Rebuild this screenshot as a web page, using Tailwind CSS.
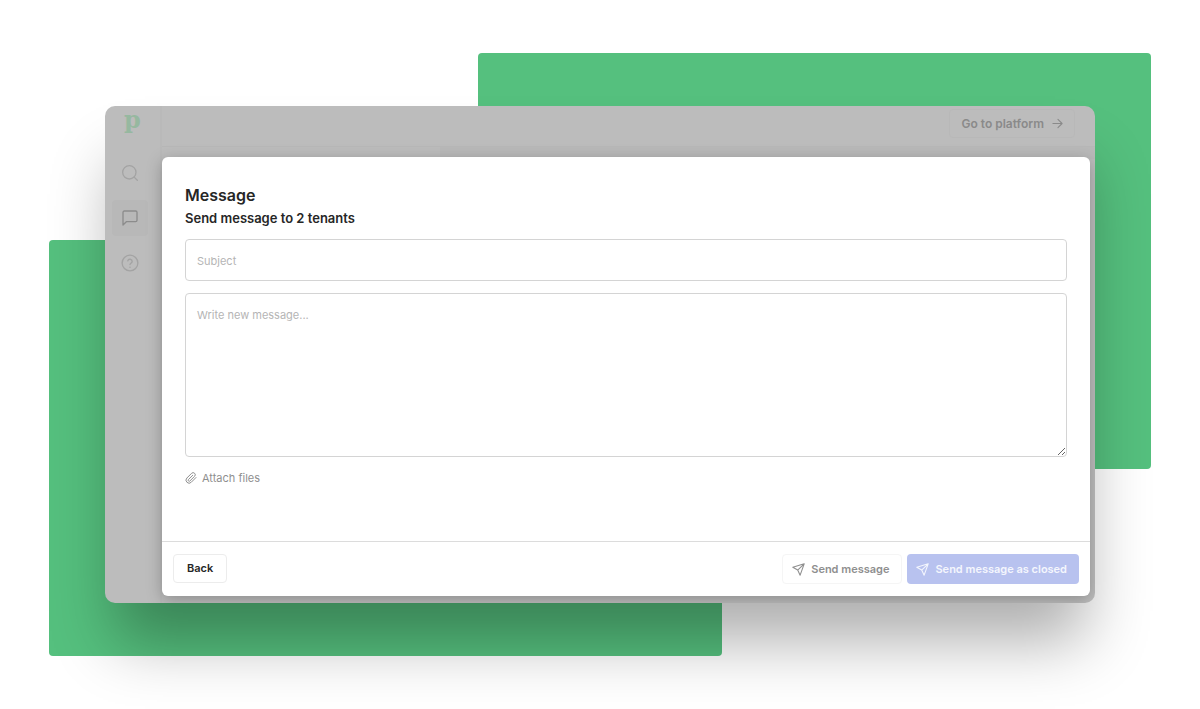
<!DOCTYPE html>
<html lang="en">
<head>
  <meta charset="UTF-8">
  <meta name="viewport" content="width=device-width, initial-scale=1.0">
  <title>Message tenants</title>
  <script src="https://cdn.jsdelivr.net/npm/@tailwindcss/browser@4"></script>
</head>
<body class="font-['Inter',sans-serif] bg-white text-[#262626]">
  <main class="px-[49px] py-[53px]">
    <div class="relative px-14 py-[53px]">
      <!-- green blocks behind the window -->
      <div class="absolute top-0 right-0 w-[61.1%] h-[416px] rounded bg-[#55c07e]"></div>
      <div class="absolute bottom-0 left-0 w-[61.1%] h-[416px] rounded bg-[#55c07e]"></div>

      <!-- app window -->
      <div class="relative rounded-[10px] bg-[#bcbcbc] shadow-[0_48px_60px_-10px_rgba(0,0,0,0.32)] overflow-hidden">
        <div class="absolute inset-0 flex">
          <aside class="w-[57px] border-r-2 border-[#b9b9b9] flex flex-col items-center">
            <a href="#" aria-label="Home" class="h-[49px] font-['DejaVu_Serif',serif] font-bold text-2xl leading-7 text-[#96b8a0]">p</a>
            <nav class="flex flex-col gap-[9px] pr-[6px]">
              <a href="#" aria-label="Search" class="size-9 rounded flex items-center justify-center text-[#a3a3a3]">
                <svg class="size-4" viewBox="0 0 24 24" fill="none" stroke="currentColor" stroke-width="2" stroke-linecap="round" stroke-linejoin="round"><circle cx="11" cy="11" r="10"/><path d="m23 23-4.800-4.800"/></svg>
              </a>
              <a href="#" aria-label="Messages" class="size-9 rounded flex items-center justify-center bg-[#b8b8b8] text-[#8c8c8c]">
                <svg class="size-4" viewBox="0 0 24 24" fill="none" stroke="currentColor" stroke-width="2" stroke-linecap="round" stroke-linejoin="round"><path d="M22.500 15.500a2 2 0 0 1-2 2H6.500L1.500 22.500V3.500a2 2 0 0 1 2-2h17a2 2 0 0 1 2 2z"/></svg>
              </a>
              <a href="#" aria-label="Help" class="size-9 rounded flex items-center justify-center text-[#a3a3a3]">
                <svg class="size-[18px]" viewBox="0 0 24 24" fill="none" stroke="currentColor" stroke-width="1.800" stroke-linecap="round" stroke-linejoin="round"><circle cx="12" cy="12" r="10.500"/><path d="M9 9.200a3 3 0 0 1 5.900.8c0 2-2.900 2.700-2.900 4"/><path d="M12 17.500h.01" stroke-width="2"/></svg>
              </a>
            </nav>
          </aside>
          <div class="flex-1">
            <header class="h-[41px] border-b border-[#b7b7b7] flex justify-end items-start pr-5 pt-[3px]">
              <a href="#" class="h-[29px] px-[11px] flex items-center gap-2 rounded border border-[#b8b8b8] text-xs font-semibold text-[#8a8a8a]">
                Go to platform
                <svg class="size-[11px]" viewBox="0 0 12 12" fill="none" stroke="currentColor" stroke-width="1.200" stroke-linecap="round" stroke-linejoin="round"><path d="M1 6h10M6.500 1.500 11 6l-4.500 4.500"/></svg>
              </a>
            </header>
            <div class="ml-[278px] h-3 bg-[#b9b9b9]"></div>
          </div>
        </div>

        <!-- message dialog -->
        <div role="dialog" aria-labelledby="dialogTitle" class="relative mt-[51px] ml-[57px] mr-[5px] mb-[7px] rounded-md bg-white shadow-[0_4px_16px_rgba(0,0,0,0.25)]">
          <form>
            <div class="px-[23px] pt-[26px] pb-[55px]">
              <h1 id="dialogTitle" class="text-base leading-6 font-semibold">Message</h1>
              <h2 class="text-[13px] leading-[22px] font-semibold">Send message to 2 tenants</h2>
              <input type="text" aria-label="Subject" placeholder="Subject" class="block w-full h-[42px] mt-[10px] px-[11px] pt-[2px] border border-[#d4d4d4] rounded text-[11px] placeholder:text-[#b5b5b5]">
              <textarea aria-label="Message" placeholder="Write new message..." class="block w-full h-[164px] mt-3 px-[11px] py-[13px] border border-[#d4d4d4] rounded text-[11px] leading-4 placeholder:text-[#b5b5b5]"></textarea>
              <button type="button" class="mt-[13px] flex items-center gap-[5px] text-[11px] leading-4 text-[#8f8f8f]">
                <svg class="size-3" viewBox="0 0 24 24" fill="none" stroke="currentColor" stroke-width="2" stroke-linecap="round" stroke-linejoin="round"><path d="m22 11-9.500 9.500a6 6 0 0 1-8.700-8.500l9.400-9.400a4.200 4.200 0 0 1 6 6l-9.400 9.300a2 2 0 0 1-2.900-2.900l8.500-8.400"/></svg>
                Attach files
              </button>
            </div>
            <div class="flex items-start justify-between px-[11px] py-3 border-t border-[#dcdcdc]">
              <button type="button" class="h-[29px] px-[13px] border border-[#ececec] rounded text-[11px] font-semibold">Back</button>
              <div class="flex gap-[5px]">
                <button type="button" class="h-[30px] pl-[9px] pr-3 flex items-center gap-[6px] border border-[#f5f5f5] rounded text-[11px] font-semibold text-[#8f8f8f]">
                  <svg class="size-[13px]" viewBox="0 0 24 24" fill="none" stroke="currentColor" stroke-width="2" stroke-linecap="round" stroke-linejoin="round"><path d="M22.500 1.500 1.500 8l9 5 4.500 9.500zM22.500 1.500 10.500 13"/></svg>
                  Send message
                </button>
                <button type="submit" class="h-[30px] pl-[9px] pr-3 flex items-center gap-[6px] rounded bg-[#b8c2ef] text-[11px] font-semibold text-[#f4f6fd]">
                  <svg class="size-[13px]" viewBox="0 0 24 24" fill="none" stroke="currentColor" stroke-width="2" stroke-linecap="round" stroke-linejoin="round"><path d="M22.500 1.500 1.500 8l9 5 4.500 9.500zM22.500 1.500 10.500 13"/></svg>
                  Send message as closed
                </button>
              </div>
            </div>
          </form>
        </div>
      </div>
    </div>
  </main>
</body>
</html>
